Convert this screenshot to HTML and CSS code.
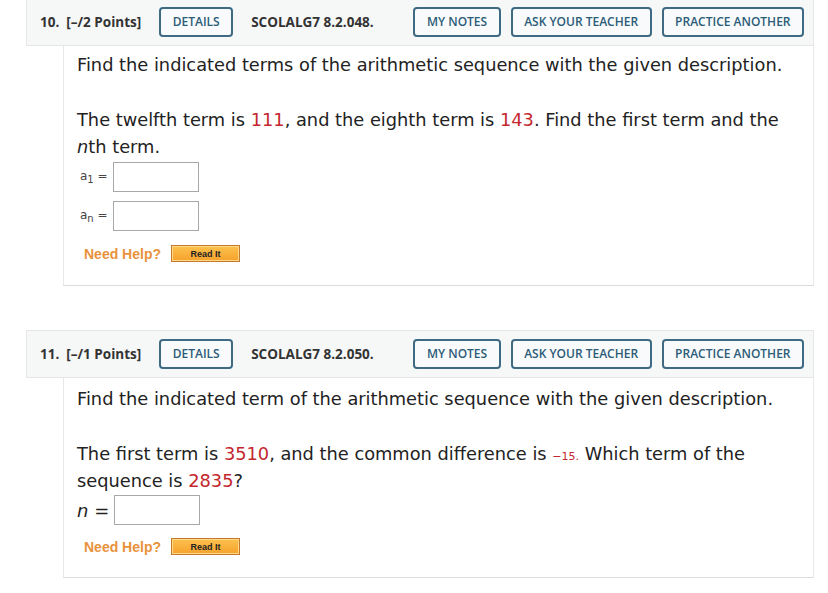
FILE: index.html
```html
<!DOCTYPE html>
<html>
<head>
<meta charset="utf-8">
<link rel="stylesheet" href="styles.css">
</head>
<body>
<div class="page">
  <section class="question first">
    <header class="qhead">
      <div class="qinfo">
        <span class="qnum">10.</span>
        <span class="qpts">[–/2 Points]</span>
      </div>
      <button class="qbtn details">DETAILS</button>
      <span class="qcode">SCOLALG7 8.2.048.</span>
      <div class="spacer"></div>
      <div class="actions">
        <button class="qbtn">MY NOTES</button>
        <button class="qbtn">ASK YOUR TEACHER</button>
        <button class="qbtn">PRACTICE ANOTHER</button>
      </div>
    </header>
    <div class="qbody body1">
      <p class="line">Find the indicated terms of the arithmetic sequence with the given description.</p>
      <p class="para">The twelfth term is <span class="red">111</span>, and the eighth term is <span class="red">143</span>. Find the first term and the <i>n</i>th term.</p>
      <div class="answers">
        <div class="ans"><span class="lbl"><i>a</i><sub>1</sub> =</span><span class="box"></span></div>
        <div class="ans"><span class="lbl"><i>a</i><sub><i>n</i></sub> =</span><span class="box"></span></div>
      </div>
      <div class="help"><span class="need">Need Help?</span><span class="readit">Read It</span></div>
    </div>
  </section>

  <section class="question second">
    <header class="qhead">
      <div class="qinfo">
        <span class="qnum">11.</span>
        <span class="qpts">[–/1 Points]</span>
      </div>
      <button class="qbtn details">DETAILS</button>
      <span class="qcode">SCOLALG7 8.2.050.</span>
      <div class="spacer"></div>
      <div class="actions">
        <button class="qbtn">MY NOTES</button>
        <button class="qbtn">ASK YOUR TEACHER</button>
        <button class="qbtn">PRACTICE ANOTHER</button>
      </div>
    </header>
    <div class="qbody body2">
      <p class="line">Find the indicated term of the arithmetic sequence with the given description.</p>
      <p class="para">The first term is <span class="red">3510</span>, and the common difference is <span class="red small">−15.</span> Which term of the sequence is <span class="red">2835</span>?</p>
      <div class="answers">
        <div class="ans n"><span class="lbl big"><i>n</i> =</span><span class="box"></span></div>
      </div>
      <div class="help"><span class="need">Need Help?</span><span class="readit">Read It</span></div>
    </div>
  </section>
</div>
</body>
</html>
```
FILE: styles.css
```css
* { box-sizing: border-box; }
html, body { margin: 0; padding: 0; background: #fff; }
.page { padding-left: 26px; width: 814px; margin-top: -2px; }

.question.second { margin-top: 44px; }

.qhead {
  display: flex;
  align-items: center;
  height: 48px;
  padding: 0 9px 0 13px;
  background: #f6f7f7;
  border: 1px solid #e6e6e6;
  font-family: "Open Sans", sans-serif;
  color: #333;
}
.qinfo { display: flex; gap: 7px; font-size: 13.5px; font-weight: 700; margin-right: 18px; }
.qcode { font-size: 13.5px; font-weight: 700; margin-left: 18px; }
.spacer { flex: 1; }
.actions { display: flex; gap: 10px; }
.qbtn {
  font-family: "Open Sans", sans-serif;
  font-size: 12px;
  font-weight: 600;
  color: #2c5c78;
  background: #f8fafb;
  border: 2px solid #3e6a84;
  border-radius: 4px;
  height: 30px;
  padding: 0 11.5px;
  line-height: 26px;
}
.qbtn.details { min-width: 73px; }

.qbody {
  margin-left: 37px;
  border-left: 1px solid #e8e8e8;
  border-right: 1px solid #e8e8e8;
  border-bottom: 1px solid #dcdcdc;
  padding-left: 13px;
  font-family: "DejaVu Sans", sans-serif;
  color: #222;
}
.body1 { height: 240px; }
.body2 { height: 200px; }

.line { margin: 0; padding-top: 7px; font-size: 17.8px; line-height: 24px; }
.para { margin: 29px 0 0; font-size: 17.8px; line-height: 27px; width: 722px; }
.red { color: #c4262d; }
.red.small { font-size: 11px; line-height: 1; }

.answers { display: flex; flex-direction: column; gap: 9px; margin-top: 2px; }
.ans { display: flex; align-items: center; }
.lbl { width: 36px; padding-left: 3px; font-size: 12px; color: #444; font-family: "DejaVu Sans", sans-serif; }
.lbl i { font-style: normal; }
.lbl sub { font-size: 10px; }
.box { width: 86px; height: 30px; border: 1px solid #a8a8a8; background: #fff; }
.lbl.big { font-size: 18px; color: #222; width: 37px; padding-left: 0; }
.lbl.big i { font-style: italic; }

.help { display: flex; align-items: center; margin-top: 14px; padding-left: 7px; }
.need { font-family: "Liberation Sans", Arial, sans-serif; font-weight: 700; font-size: 14px; color: #e8923c; margin-right: 10px; }
.readit {
  width: 69px; height: 17px;
  background: linear-gradient(#fcc14e, #f6a22c);
  border: 1px solid #c5772a;
  box-shadow: inset 0 0 0 1px #ffd98a;
  font-family: "Liberation Sans", Arial, sans-serif;
  font-weight: 700; font-size: 9px; color: #222;
  display: flex; align-items: center; justify-content: center;
}
.body2 .line { padding-top: 9px; }
.body2 .answers { margin-top: 1px; }
.body2 .help { margin-top: 13px; }
```
